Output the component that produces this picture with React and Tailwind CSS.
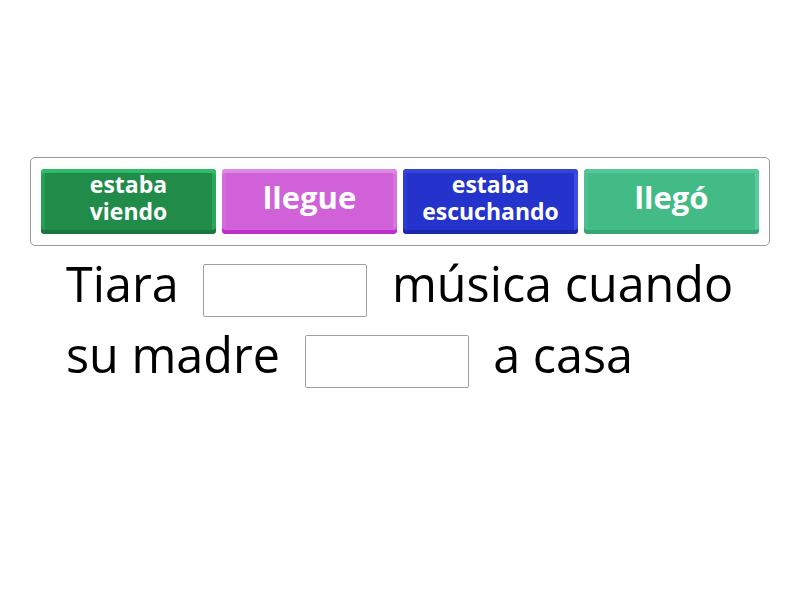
const options = [
  {
    label: ["estaba", "viendo"],
    cls: "bg-[#218b4a] shadow-[inset_0_4px_0_#2cbd66,inset_0_-4px_0_#1b7740,inset_-4px_0_0_#27a85a,inset_4px_0_0_#25a055]",
  },
  {
    label: ["llegue"],
    cls: "bg-[#d061d9] shadow-[inset_0_4px_0_#de88e4,inset_0_-4px_0_#bf2fcc,inset_-4px_0_0_#d773de,inset_4px_0_0_#d36bdb]",
  },
  {
    label: ["estaba", "escuchando"],
    cls: "bg-[#2333cc] shadow-[inset_0_4px_0_#3446d9,inset_0_-4px_0_#1b27ad,inset_-4px_0_0_#3a4fe0,inset_4px_0_0_#2b3cd4]",
  },
  {
    label: ["llegó"],
    cls: "bg-[#43bb86] shadow-[inset_0_4px_0_#56c796,inset_0_-4px_0_#35a673,inset_-4px_0_0_#5bc99a,inset_4px_0_0_#4cc08e]",
  },
];

function Tile({ label, cls }) {
  const single = label.length === 1;
  return (
    <div
      className={`w-[175px] h-[65px] rounded-[4px] flex flex-col items-center justify-center text-white font-bold ${cls} ${
        single ? "text-[31px] leading-[36px] pb-[10px]" : "text-[23px] leading-[27px] pb-[8px]"
      }`}
    >
      {label.map((l) => (
        <span key={l}>{l}</span>
      ))}
    </div>
  );
}

function Blank() {
  return (
    <span className="inline-block align-middle w-[164px] h-[53px] mx-[12px] border border-[#a0a0a0] rounded-[2px] bg-white relative top-[1px]" />
  );
}

export default function App() {
  return (
    <div className="w-[800px] h-[600px] bg-white font-['Open_Sans',sans-serif] text-black">
      <div className="pt-[157px] px-[30px]">
        <div className="h-[89px] border border-[#9a9a9a] rounded-[5px] px-[10px] pt-[11px] flex gap-[6px]">
          {options.map((o, i) => (
            <Tile key={i} {...o} />
          ))}
        </div>
      </div>
      <div className="pl-[66px] pt-[2px] text-[48.5px] leading-[71px]">
        <div>
          Tiara <Blank /> música cuando
        </div>
        <div>
          su madre <Blank /> a casa
        </div>
      </div>
    </div>
  );
}
